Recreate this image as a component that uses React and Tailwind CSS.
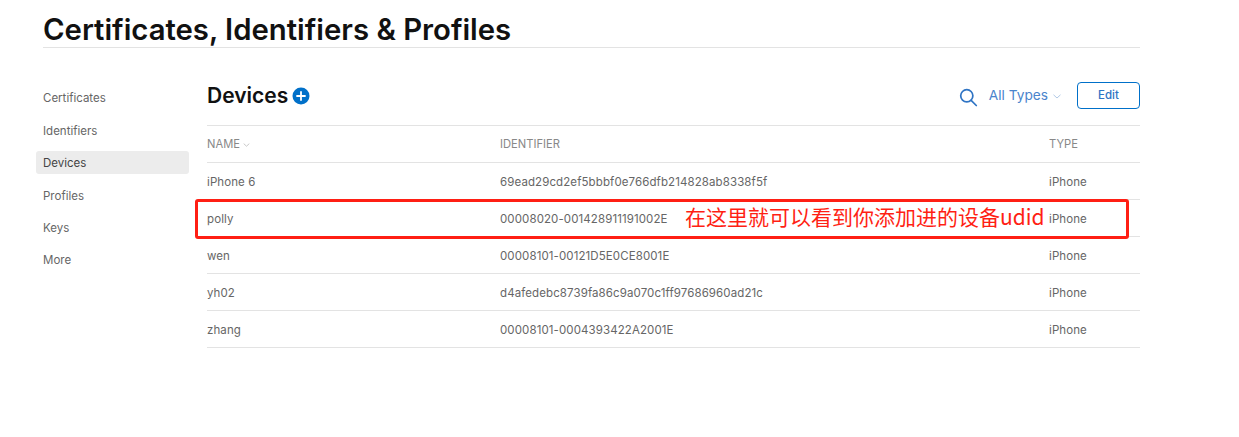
const font = { fontFamily: '"Inter", "Noto Sans CJK SC", sans-serif' };

const navItems = ["Certificates", "Identifiers", "Devices", "Profiles", "Keys", "More"];
const rows = [
  ["iPhone 6", "69ead29cd2ef5bbbf0e766dfb214828ab8338f5f"],
  ["polly", "00008020-001428911191002E"],
  ["wen", "00008101-00121D5E0CE8001E"],
  ["yh02", "d4afedebc8739fa86c9a070c1ff97686960ad21c"],
  ["zhang", "00008101-0004393422A2001E"],
];

function Chevron({ className }) {
  return (
    <svg viewBox="0 0 8 5" className={className} fill="none" stroke="currentColor" strokeWidth="0.8">
      <path d="M0.5 0.8 L4 4 L7.5 0.8" />
    </svg>
  );
}

export default function App() {
  return (
    <div style={font} className="relative w-[1239px] h-[437px] bg-white overflow-hidden antialiased">
      <div className="ml-[43px] w-[1097px] h-[48px] border-b border-[#e3e3e3]">
        <h1 className="pt-[12px] text-[29.3px] leading-[36px] font-semibold text-[#111111] whitespace-nowrap">
          Certificates, Identifiers &amp; Profiles
        </h1>
      </div>

      <div className="flex pl-[36px] pt-[34px]">
        <nav className="w-[153px] shrink-0 pt-[4px] flex flex-col gap-[9.4px]">
          {navItems.map((n) => (
            <div
              key={n}
              className={`h-[23px] pl-[7px] pt-[3px] flex items-center rounded-[3px] text-[11.5px] ${
                n === "Devices" ? "bg-[#ececec] text-[#444444]" : "text-[#666666]"
              }`}
            >
              {n}
            </div>
          ))}
        </nav>

        <main className="ml-[18px] w-[933px]">
          <div className="h-[43px] border-b border-[#e3e3e3] box-content">
            <div className="flex items-center h-[27px] w-full">
              <h2 className="text-[21px] leading-[26px] font-semibold text-[#111111]">Devices</h2>
              <svg viewBox="0 0 18 18" className="w-[18px] h-[18px] ml-[4px] mt-[1px]">
                <circle cx="9" cy="9" r="8.5" fill="#0070c9" />
                <path d="M9 5v8M5 9h8" stroke="#fff" strokeWidth="1.8" strokeLinecap="round" />
              </svg>
              <svg viewBox="0 0 20 20" className="ml-auto w-[19px] h-[19px] mt-[3px]" fill="none" stroke="#2f74c4" strokeWidth="1.8">
                <circle cx="8.2" cy="8.2" r="6.4" />
                <path d="M12.8 13 L18.2 18.4" strokeLinecap="round" />
              </svg>
              <span className="ml-[11px] text-[13.7px] text-[#4a84cc]">All Types</span>
              <Chevron className="ml-[5px] mt-[2px] w-[8px] h-[5px] text-[#9dbbe0]" />
              <button className="ml-[16px] w-[63px] h-[27px] border border-[#0070c9] rounded-[4px] text-[11.5px] font-medium text-[#2f74c4] leading-none">
                Edit
              </button>
            </div>
          </div>

          <div className="h-[37px] pt-[1px] flex items-center border-b border-[#e3e3e3] text-[11.2px] text-[#888888]">
            <div className="w-[293px] flex items-center gap-[3px]">
              NAME <Chevron className="w-[7px] h-[4px] mt-[1px] text-[#aaaaaa]" />
            </div>
            <div className="w-[549px]">IDENTIFIER</div>
            <div>TYPE</div>
          </div>

          {rows.map(([name, id]) => (
            <div key={name} className="h-[37px] pt-[3px] flex items-center border-b border-[#e3e3e3] text-[11.5px] tracking-[0.1px] text-[#666666]">
              <div className="w-[293px]">{name}</div>
              <div className="w-[549px] whitespace-nowrap">{id}</div>
              <div>iPhone</div>
            </div>
          ))}
        </main>
      </div>

      <div className="absolute left-[195px] top-[199px] w-[934px] h-[40px] border-[3px] border-[#ff1f14] rounded-[3px]" />
      <div className="absolute left-[685px] top-[203px] text-[21px] leading-[26px] font-normal text-[#ff1f14] whitespace-nowrap" style={{ fontFamily: '"Noto Sans CJK SC", sans-serif' }}>
        在这里就可以看到你添加进的设备udid
      </div>
    </div>
  );
}
